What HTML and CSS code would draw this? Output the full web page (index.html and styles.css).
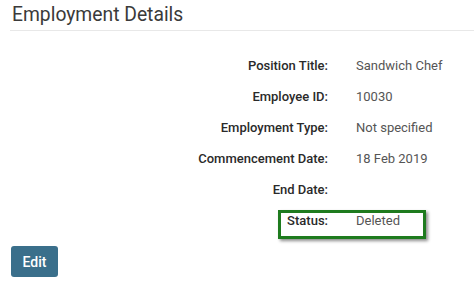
FILE: index.html
```html
<!DOCTYPE html>
<html lang="en">
<head>
  <meta charset="UTF-8">
  <title>Employment Details</title>
  <link rel="stylesheet" href="styles.css">
</head>
<body>
  <div class="panel">
    <h2 class="panel-title">Employment Details</h2>

    <dl class="details">
      <dt>Position Title:</dt>      <dd>Sandwich Chef</dd>
      <dt>Employee ID:</dt>         <dd>10030</dd>
      <dt>Employment Type:</dt>     <dd>Not specified</dd>
      <dt>Commencement Date:</dt>   <dd>18 Feb 2019</dd>
      <dt>End Date:</dt>            <dd></dd>
      <dt class="hl">Status:</dt>   <dd>Deleted</dd>
    </dl>

    <button class="btn-edit">Edit</button>
  </div>
</body>
</html>
```

FILE: styles.css
```css
body {
  margin: 0;
  background: #fff;
  font-family: Roboto, "Liberation Sans", sans-serif;
  color: #333;
}

.panel { padding: 0 0 0 10px; }

.panel-title {
  margin: 0;
  padding: 5px 0 5px 2px;
  font-size: 19.3px; font-weight: 400; line-height: 20px;
  color: #3a3a3a;
  border-bottom: 1px solid #e8e8e8;
}

/* two column label / value list */
.details {
  display: grid;
  grid-template-columns: 318px 1fr;
  grid-auto-rows: 31px;
  column-gap: 28px;
  align-items: center;
  margin: 19px 0 0;
  font-size: 13px;
  line-height: 16px;
}
.details dt { text-align: right; font-weight: 500; color: #2a2a2a; position: relative; }
.details dd { margin: 0; color: #555; }

/* green highlight around the Status row */
.hl::before {
  content: ""; position: absolute;
  right: -98px; top: -3px;
  width: 142px; height: 23px;
  border: 3px solid #1e7b1e;
  box-shadow: 2px 2px 3px rgba(0,0,0,0.45);
}

.btn-edit {
  margin-top: 10px;
  margin-left: 1px;
  width: 47px; height: 31px;
  background: #3a6f8b; color: #fff;
  border: 0; border-radius: 3px;
  font-family: inherit; font-size: 14px; font-weight: 500;
}
```
